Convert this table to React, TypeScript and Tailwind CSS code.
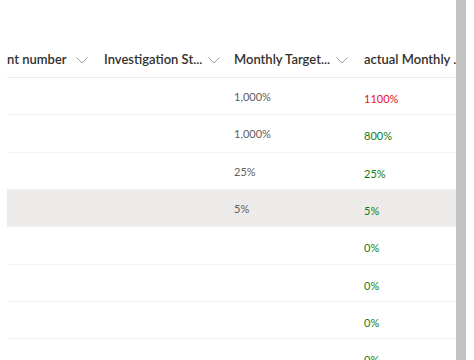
import React from 'react';

interface Row {
  target: string;
  actual: string;
  over?: boolean;
  selected?: boolean;
  h: number;
}

const rows: Row[] = [
  { target: '1,000%', actual: '1100%', over: true, h: 37 },
  { target: '1,000%', actual: '800%', h: 38 },
  { target: '25%', actual: '25%', h: 37 },
  { target: '5%', actual: '5%', selected: true, h: 37 },
  { target: '', actual: '0%', h: 38 },
  { target: '', actual: '0%', h: 37 },
  { target: '', actual: '0%', h: 37 },
  { target: '', actual: '0%', h: 37 },
];

const Chevron: React.FC = () => (
  <svg width="12" height="7" viewBox="0 0 12 7" className="shrink-0">
    <polyline points="0.5,0.5 6,6 11.5,0.5" fill="none" stroke="#a19f9d" strokeWidth="1" />
  </svg>
);

const HeaderCell: React.FC<{ label: string; width: string; chevron?: boolean }> = ({
  label,
  width,
  chevron = true,
}) => (
  <div className={`${width} shrink-0 flex items-center gap-[6px] pl-2`}>
    <span className="text-[13px] font-semibold text-[#323130] whitespace-nowrap">{label}</span>
    {chevron && <Chevron />}
  </div>
);

export default function App() {
  return (
    <div
      className="w-[474px] h-[360px] bg-white flex overflow-hidden"
      style={{ fontFamily: 'Lato, "Open Sans", sans-serif' }}
    >
      <div className="w-[456px] h-full overflow-hidden pl-[7px] pt-[43px]">
        {/* header */}
        <div className="flex h-[35px] border-b border-[#edebe9]">
          <div className="w-[89px] shrink-0 flex items-center gap-[9px]">
            <span className="text-[13px] font-semibold text-[#323130] whitespace-nowrap">nt number</span>
            <Chevron />
          </div>
          <HeaderCell label="Investigation St..." width="w-[130px]" />
          <HeaderCell label="Monthly Target..." width="w-[130px]" />
          <HeaderCell label="actual Monthly ." width="w-[98px]" chevron={false} />
        </div>

        {/* body */}
        {rows.map((row, i) => (
          <div
            key={i}
            className={`flex border-b border-[#f3f2f1] ${row.selected ? 'bg-[#edebe9]' : 'bg-white'}`}
            style={{ height: row.h }}
          >
            <div className="w-[89px] shrink-0" />
            <div className="w-[130px] shrink-0" />
            <div className="w-[130px] shrink-0 pl-2 pt-[11px] text-[11px] text-[#605e5c]">{row.target}</div>
            <div
              className={`w-[92px] shrink-0 pl-2 pt-[13px] text-[11px] ${
                row.over ? 'text-[#e81123]' : 'text-[#107c10]'
              }`}
            >
              {row.actual}
            </div>
          </div>
        ))}
      </div>
      <div className="w-[10px] h-full bg-[#c2c2c2]" />
      <div className="flex-1 h-full bg-white" />
    </div>
  );
}
